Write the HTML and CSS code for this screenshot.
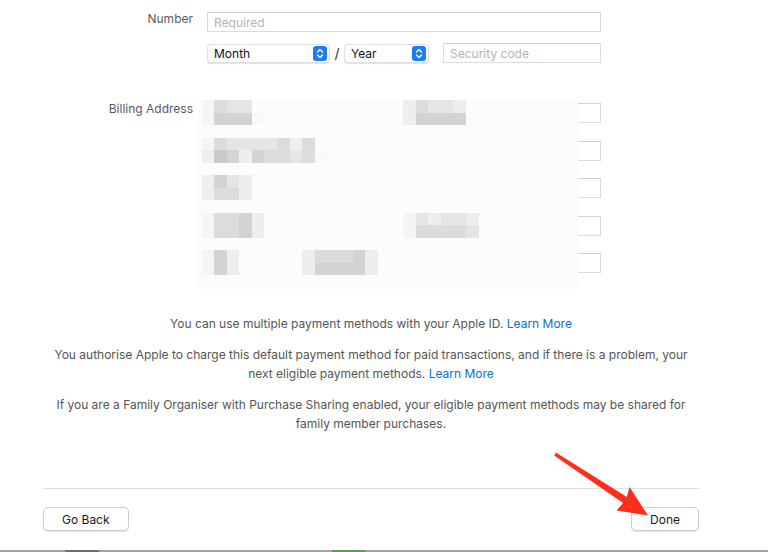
FILE: index.html
```html
<!DOCTYPE html>
<html>
<head>
<meta charset="utf-8">
<link rel="stylesheet" href="styles.css">
</head>
<body>
<div class="screen">
  <div class="page">
    <div class="row r-number">
      <div class="label">Number</div>
      <div class="field"><div class="input ph">Required</div></div>
    </div>
    <div class="row r-exp">
      <div class="label"></div>
      <div class="field exp">
        <div class="select month"><span>Month</span><span class="stepper"><svg viewBox="0 0 14 15" width="14" height="15"><path d="M4.5 6 L7 3.6 L9.5 6 M4.5 9 L7 11.4 L9.5 9" fill="none" stroke="#fff" stroke-width="1.4" stroke-linecap="round" stroke-linejoin="round"/></svg></span></div>
        <span class="slash">/</span>
        <div class="select year"><span>Year</span><span class="stepper"><svg viewBox="0 0 14 15" width="14" height="15"><path d="M4.5 6 L7 3.6 L9.5 6 M4.5 9 L7 11.4 L9.5 9" fill="none" stroke="#fff" stroke-width="1.4" stroke-linecap="round" stroke-linejoin="round"/></svg></span></div>
        <div class="input ph sec">Security code</div>
      </div>
    </div>
    <div class="row r-addr">
      <div class="label">Billing Address</div>
      <div class="field addr">
        <div class="input"></div>
        <div class="input"></div>
        <div class="input"></div>
        <div class="input"></div>
        <div class="input"></div>
        <div class="mosaic">
          <div class="band">
            <div class="sub"><i class="k1"></i><i class="k4"></i><i class="k3"></i><i class="k3"></i><i class="k9"></i><i class="k9"></i><i class="k9"></i><i class="k9"></i><i class="k9"></i><i class="k9"></i><i class="k9"></i><i class="k9"></i><i class="k9"></i><i class="k9"></i><i class="k9"></i><i class="k9"></i><i class="k2"></i><i class="k4"></i><i class="k3"></i><i class="k3"></i><i class="k2"></i></div>
            <div class="sub"><i class="k1"></i><i class="k5"></i><i class="k5"></i><i class="k5"></i><i class="k8"></i><i class="k9"></i><i class="k9"></i><i class="k9"></i><i class="k9"></i><i class="k9"></i><i class="k9"></i><i class="k9"></i><i class="k9"></i><i class="k9"></i><i class="k9"></i><i class="k9"></i><i class="k2"></i><i class="k5"></i><i class="k5"></i><i class="k5"></i><i class="k5"></i></div>
          </div>
          <div class="band">
            <div class="sub"><i class="k1"></i><i class="k4"></i><i class="k3"></i><i class="k3"></i><i class="k3"></i><i class="k3"></i><i class="k4"></i><i class="k2"></i><i class="k4"></i></div>
            <div class="sub"><i class="k2"></i><i class="k6"></i><i class="k5"></i><i class="k2"></i><i class="k5"></i><i class="k4"></i><i class="k4"></i><i class="k3"></i><i class="k4"></i><i class="k8"></i></div>
          </div>
          <div class="band">
            <div class="sub"><i class="k2"></i><i class="k5"></i><i class="k3"></i><i class="k2"></i></div>
            <div class="sub"><i class="k2"></i><i class="k4"></i><i class="k4"></i><i class="k2"></i></div>
          </div>
          <div class="band">
            <div class="sub"><i class="k1"></i><i class="k4"></i><i class="k4"></i><i class="k5"></i><i class="k2"></i><i class="k9"></i><i class="k9"></i><i class="k9"></i><i class="k9"></i><i class="k9"></i><i class="k9"></i><i class="k9"></i><i class="k9"></i><i class="k9"></i><i class="k9"></i><i class="k9"></i><i class="k1"></i><i class="k3"></i><i class="k2"></i><i class="k3"></i><i class="k3"></i><i class="k2"></i></div>
            <div class="sub"><i class="k1"></i><i class="k4"></i><i class="k4"></i><i class="k5"></i><i class="k2"></i><i class="k9"></i><i class="k9"></i><i class="k9"></i><i class="k9"></i><i class="k9"></i><i class="k9"></i><i class="k9"></i><i class="k9"></i><i class="k9"></i><i class="k9"></i><i class="k9"></i><i class="k1"></i><i class="k4"></i><i class="k4"></i><i class="k4"></i><i class="k4"></i><i class="k3"></i></div>
          </div>
          <div class="band">
            <div class="sub"><i class="k1"></i><i class="k5"></i><i class="k2"></i><i class="k9"></i><i class="k9"></i><i class="k9"></i><i class="k9"></i><i class="k9"></i><i class="k2"></i><i class="k4"></i><i class="k4"></i><i class="k4"></i><i class="k5"></i><i class="k2"></i></div>
            <div class="sub"><i class="k1"></i><i class="k5"></i><i class="k2"></i><i class="k9"></i><i class="k9"></i><i class="k9"></i><i class="k9"></i><i class="k9"></i><i class="k2"></i><i class="k5"></i><i class="k5"></i><i class="k5"></i><i class="k5"></i><i class="k2"></i></div>
          </div>
        </div>
      </div>
    </div>
    <div class="notes">
      <p>You can use multiple payment methods with your Apple ID. <a>Learn More</a></p>
      <p>You authorise Apple to charge this default payment method for paid transactions, and if there is a problem, your next eligible payment methods. <a>Learn More</a></p>
      <p>If you are a Family Organiser with Purchase Sharing enabled, your eligible payment methods may be shared for family member purchases.</p>
    </div>
    <div class="divider"></div>
    <div class="buttons">
      <button class="btn">Go Back</button>
      <button class="btn">Done</button>
    </div>
  </div>
  <div class="strip"><span class="s1"></span><span class="s2"></span><span class="s3"></span><span class="s4"></span><span class="s5"></span></div>
</div>
<svg class="arrow" viewBox="0 0 768 552" width="768" height="552">
  <polygon points="555.8,452.4 554.2,455.6 623.1,502.9 616.5,510.5 648,515.5 629.5,487 626.9,497.1" fill="#fe2d1c"/>
</svg>
</body>
</html>
```
FILE: styles.css
```css
html, body {
  margin: 0;
  padding: 0;
  background: #ffffff;
}
body {
  font-family: "Inter", "Liberation Sans", sans-serif;
  font-size: 12px;
  color: #222;
}
.screen {
  width: 768px;
  height: 552px;
  display: flex;
  flex-direction: column;
  overflow: hidden;
}
.page {
  flex: 1;
  width: 656px;
  margin-left: 43px;
  padding-top: 12px;
}
.row {
  display: grid;
  grid-template-columns: 150px 394px;
  column-gap: 14px;
}
.label {
  text-align: right;
  color: #5b5b5b;
  font-size: 12px;
  line-height: 14px;
  margin-top: 0px;
}
.input {
  box-sizing: border-box;
  height: 20px;
  border: 1px solid #dcdcdc;
  border-top-color: #d2d2d2;
  background: #fff;
}
.ph {
  color: #b4b4b4;
  font-size: 12px;
  line-height: 19px;
  padding-left: 6px;
}
.r-exp {
  margin-top: 11px;
}
.exp {
  display: flex;
  align-items: center;
  height: 20px;
}
.select {
  box-sizing: border-box;
  height: 19px;
  border: 1px solid #e0e0e0;
  border-radius: 4px;
  box-shadow: 0 0.5px 1px rgba(0,0,0,0.12);
  background: #fff;
  display: flex;
  align-items: center;
  justify-content: space-between;
  padding-left: 6px;
  padding-right: 2px;
  font-size: 12px;
  color: #111;
}
.month { width: 123px; }
.year { width: 85px; }
.stepper {
  width: 14px;
  height: 15px;
  border-radius: 3px;
  background: #1b7cf4;
  display: flex;
}
.slash {
  width: 14px;
  text-align: center;
  color: #333;
  font-size: 14px;
}
.sec {
  width: 158px;
  margin-left: 14px;
}
.r-addr {
  margin-top: 40px;
}
.r-addr .label {
  margin-top: -1px;
}
.addr {
  position: relative;
  display: flex;
  flex-direction: column;
  gap: 17.5px;
}
.mosaic {
  position: absolute;
  left: -9px;
  top: -3px;
  width: 380px;
  height: 190px;
  background: #fcfcfc;
  padding-left: 3.5px;
  box-sizing: border-box;
}
.band {
  height: 37.5px;
}
.sub {
  display: flex;
  height: 12.5px;
}
.sub i {
  display: block;
  width: 12.6px;
  height: 12.5px;
  flex: none;
}
.k1 { background: #f5f5f5; }
.k2 { background: #eeeeee; }
.k3 { background: #e5e5e5; }
.k4 { background: #dcdcdc; }
.k5 { background: #d3d3d3; }
.k6 { background: #c9c9c9; }
.k8 { background: #f9f9f9; }
.k9 { background: transparent; }
.notes {
  margin-top: 40.5px;
  text-align: center;
  color: #555;
  font-size: 12px;
  line-height: 19px;
}
.notes p {
  margin: 0 0 12px 0;
}
.notes p:last-child {
  margin-bottom: 0;
}
.notes a {
  color: #0b70d6;
}
.divider {
  margin-top: 55.5px;
  height: 1px;
  background: #dedede;
}
.buttons {
  margin-top: 18px;
  display: flex;
  justify-content: space-between;
}
.btn {
  box-sizing: border-box;
  height: 24px;
  padding: 0 18px;
  background: #fff;
  border: 1px solid #cfcfcf;
  border-radius: 5px;
  box-shadow: 0 1px 1.5px rgba(0,0,0,0.12);
  font-family: "Inter", "Liberation Sans", sans-serif;
  font-size: 12px;
  color: #1a1a1a;
}
.strip {
  height: 2px;
  background: #a3a3a3;
  display: flex;
}
.strip span { display: block; height: 2px; }
.s1 { width: 65px; }
.s2 { width: 34px; background: #6e6e6e; }
.s3 { width: 233px; }
.s4 { width: 34px; background: #5d9a5d; }
.s5 { flex: 1; }
.arrow {
  position: absolute;
  left: 0;
  top: 0;
  pointer-events: none;
}
```
